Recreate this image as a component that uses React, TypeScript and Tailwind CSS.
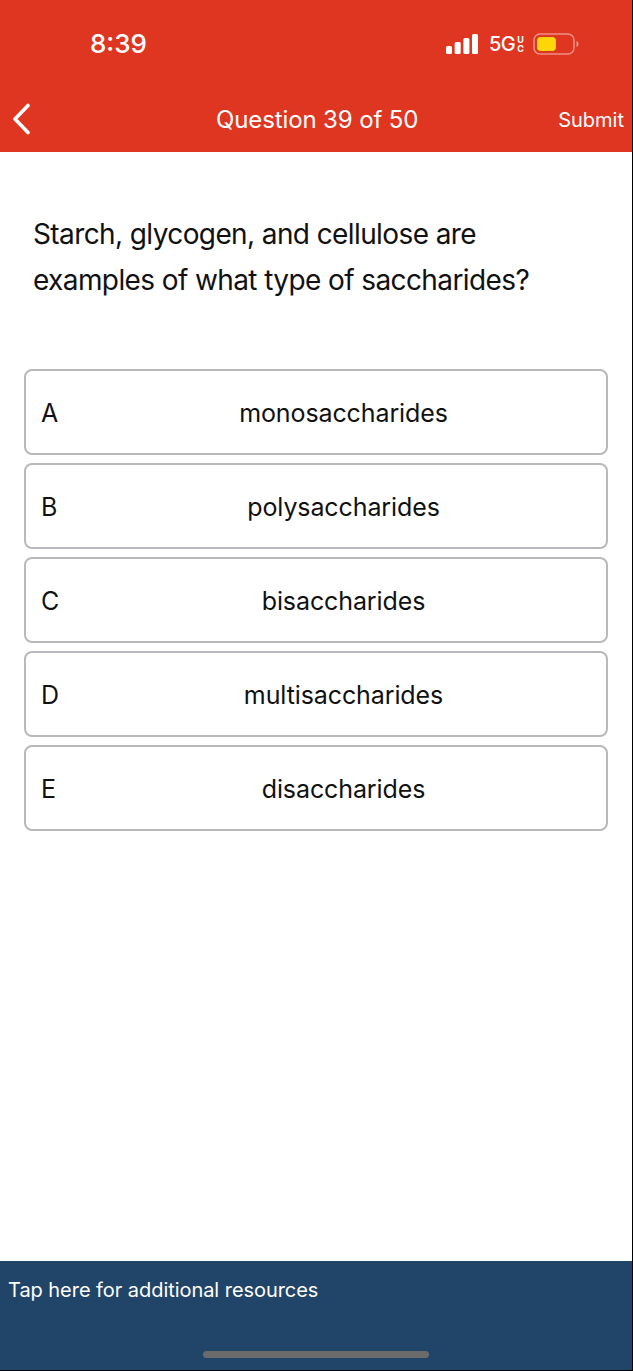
const options = [
  ["A", "monosaccharides"],
  ["B", "polysaccharides"],
  ["C", "bisaccharides"],
  ["D", "multisaccharides"],
  ["E", "disaccharides"],
];

export default function App() {
  return (
    <div className="flex h-[1371px] w-[633px] flex-col overflow-hidden border-r border-b border-black bg-white font-['Inter',sans-serif] text-[#111]">
      <header className="h-[152px] shrink-0 bg-[#df3622] text-white">
        <div className="flex h-[88px] items-center pl-[90px] pr-[53px]">
          <span className="text-[26px] font-medium leading-none">8:39</span>
          <div className="ml-auto flex items-center">
            <svg width="32" height="21" viewBox="0 0 32 21" fill="#fff" aria-hidden="true">
              <rect x="0" y="12" width="6" height="8" rx="1.5" />
              <rect x="8.700" y="8" width="6" height="12" rx="1.5" />
              <rect x="17.400" y="4" width="6" height="16" rx="1.5" />
              <rect x="26" y="0" width="6" height="20" rx="1.5" />
            </svg>
            <span className="ml-[11px] text-[20px] font-medium leading-none tracking-[-0.5px]">5G</span>
            <span className="ml-[2px] flex flex-col text-[9px] font-bold leading-[9px]">
              <span>U</span>
              <span>C</span>
            </span>
            <svg className="ml-[9px]" width="46" height="22" viewBox="0 0 46 22" aria-hidden="true">
              <rect x="1" y="1" width="40" height="20" rx="6" fill="none" stroke="#fff" strokeOpacity="0.45" strokeWidth="1.5" />
              <rect x="4" y="4" width="19" height="14" rx="4" fill="#ffd60a" />
              <path d="M43.5 8v6c1.3-.4 2-1.600 2-3s-.7-2.600-2-3z" fill="#fff" fillOpacity="0.5" />
            </svg>
          </div>
        </div>
        <div className="flex h-[64px] items-center pb-[2px]">
          <svg className="ml-[12px] shrink-0" width="20" height="32" viewBox="0 0 20 32" fill="none" aria-hidden="true">
            <path d="M16 2.500 3 16l13 13.500" stroke="#fff" strokeWidth="3.600" strokeLinecap="round" strokeLinejoin="round" />
          </svg>
          <span className="ml-[184px] pt-[2px] text-[24px] leading-none tracking-[-0.12px]">Question 39 of 50</span>
          <span className="ml-auto pr-[8px] pt-[2px] text-[20px] leading-none">Submit</span>
        </div>
      </header>

      <main className="flex-1">
        <p className="px-[33px] pt-[59px] text-[28px] leading-[46px] tracking-[-0.6px]">
          Starch, glycogen, and cellulose are
          <br />
          examples of what type of saccharides?
        </p>
        <ul className="mt-[66px] flex flex-col gap-[8px] px-[24px]">
          {options.map(([letter, text]) => (
            <li
              key={letter}
              className="flex h-[86px] items-center rounded-[8px] border-2 border-[#b9b9bd] pl-[15px] pt-[3px] text-[25px] tracking-[-0.1px]"
            >
              <span className="w-[40px]">{letter}</span>
              <span className="flex-1 text-center">{text}</span>
            </li>
          ))}
        </ul>
      </main>

      <footer className="flex h-[109px] shrink-0 flex-col bg-[#214568] text-white">
        <p className="pl-[8px] pt-[16px] text-[20px] leading-[26px] tracking-[-0.05px]">Tap here for additional resources</p>
        <div className="mx-auto mt-auto mb-[12px] h-[7px] w-[226px] rounded-full bg-[#6b6b6b]" />
      </footer>
    </div>
  );
}
